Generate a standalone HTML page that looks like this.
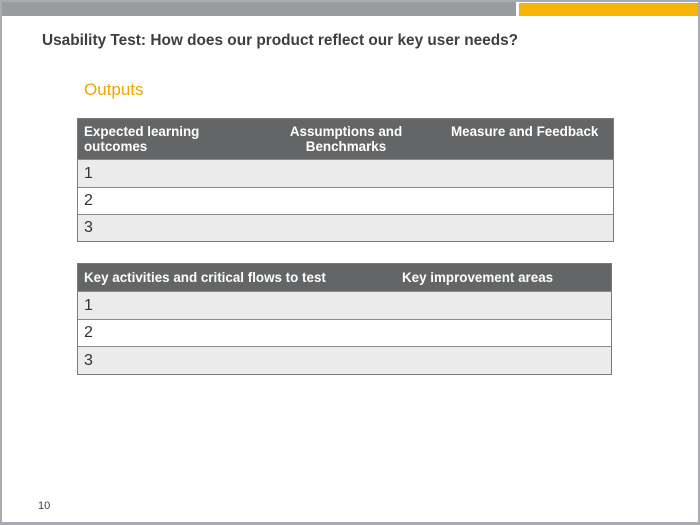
<!DOCTYPE html>
<html><head><style>
body{margin:0;width:700px;height:525px;background:#a9abb0;position:relative;font-family:"Liberation Sans",sans-serif;overflow:hidden}
.slide{position:absolute;left:2px;top:2px;width:696px;height:520px;background:#fff}
.gb{position:absolute;left:2px;top:2px;width:514px;height:14px;background:#999b9c}
.yb{position:absolute;left:519px;top:3px;width:179px;height:13px;background:#f5b406}
.t{position:absolute;left:42px;top:32px;font-size:15.4px;font-weight:bold;color:#3e3e40}
.o{position:absolute;left:84px;top:80px;font-size:17px;color:#f0a500}
.tb{position:absolute;border:1px solid #7a7a7a;box-sizing:border-box}
.h{background:#646566;color:#fff;font-weight:bold;font-size:13.4px;position:relative}
.r{border-top:1px solid #8a8a8a;box-sizing:border-box;font-size:16px;color:#333;padding-left:6px}
.g{background:#ebebeb}
.n{position:absolute;left:38px;top:500px;font-size:11px;color:#444}
</style></head><body>
<div class="slide"></div><div class="gb"></div><div class="yb"></div>
<div class="t">Usability Test: How does our product reflect our key user needs?</div>
<div class="o">Outputs</div>
<div class="tb" style="left:77px;top:118px;width:537px;height:124px">
<div class="h" style="height:40px">
<span style="position:absolute;left:6px;top:5px;line-height:15px">Expected learning<br>outcomes</span>
<span style="position:absolute;left:198px;top:5px;width:140px;text-align:center;line-height:15px">Assumptions and<br>Benchmarks</span>
<span style="position:absolute;left:373px;top:5px">Measure and Feedback</span></div>
<div class="r g" style="height:28px;line-height:27px">1</div>
<div class="r" style="height:27px;line-height:26px">2</div>
<div class="r g" style="height:27px;line-height:26px">3</div>
</div>
<div class="tb" style="left:77px;top:263px;width:535px;height:112px">
<div class="h" style="height:27px">
<span style="position:absolute;left:6px;top:6px">Key activities and critical flows to test</span>
<span style="position:absolute;left:324px;top:6px">Key improvement areas</span></div>
<div class="r g" style="height:28px;line-height:27px">1</div>
<div class="r" style="height:27px;line-height:26px">2</div>
<div class="r g" style="height:28px;line-height:27px">3</div>
</div>
<div class="n">10</div>
</body></html>
